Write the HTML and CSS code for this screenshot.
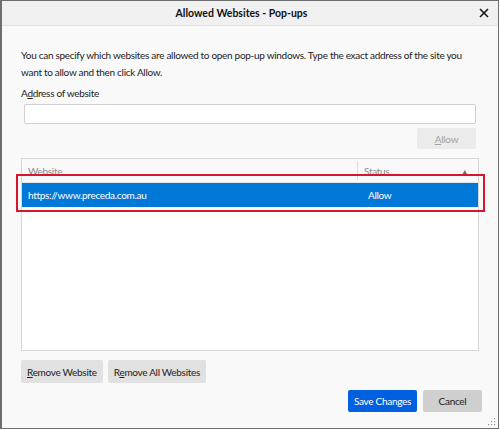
FILE: index.html
```html
<!DOCTYPE html>
<html>
<head>
<meta charset="utf-8">
<link rel="stylesheet" href="styles.css">
</head>
<body>
<div class="window">
  <div class="titlebar">
    <span class="spacer"></span>
    <span class="title">Allowed Websites - Pop-ups</span>
    <span class="close-wrap"><svg class="close" width="10" height="10" viewBox="0 0 10 10"><path d="M1 1 L9 9 M9 1 L1 9" stroke="#1a1a1a" stroke-width="1.6"/></svg></span>
  </div>
  <div class="content">
    <p class="intro">You can specify which websites are allowed to open pop-up windows. Type the exact address of the site you want to allow and then click Allow.</p>
    <label class="label">A<u>d</u>dress of website</label>
    <input class="address" type="text">
    <div class="allow-row"><button class="btn btn-disabled"><u>A</u>llow</button></div>
    <div class="table-wrap">
      <div class="table">
        <div class="thead">
          <div class="th th-site">Website</div>
          <div class="th th-status">Status<span class="sort">&#9650;</span></div>
        </div>
        <div class="row selected">
          <div class="td td-site">https://www.preceda.com.au</div>
          <div class="td td-status">Allow</div>
        </div>
      </div>
      <div class="highlight"></div>
    </div>
    <div class="remove-row">
      <button class="btn btn-grey"><u>R</u>emove Website</button>
      <button class="btn btn-grey">R<u>e</u>move All Websites</button>
    </div>
    <div class="footer">
      <button class="btn btn-primary">Save Changes</button>
      <button class="btn btn-cancel">Cancel</button>
    </div>
  </div>
  <svg class="grip" width="8" height="8" viewBox="0 0 8 8"><g fill="#9a9a9a"><rect x="6" y="0" width="1.2" height="1.2"/><rect x="3" y="3" width="1.2" height="1.2"/><rect x="6" y="3" width="1.2" height="1.2"/><rect x="0" y="6" width="1.2" height="1.2"/><rect x="3" y="6" width="1.2" height="1.2"/><rect x="6" y="6" width="1.2" height="1.2"/></g></svg>
</div>
</body>
</html>
```
FILE: styles.css
```css
html, body {
  margin: 0;
  padding: 0;
  background: #ffffff;
}
body {
  font-family: Lato, "Open Sans", sans-serif;
  font-size: 10px;
  letter-spacing: -0.3px;
  color: #222222;
}
.window {
  position: relative;
  width: 499px;
  height: 429px;
  box-sizing: border-box;
  border: 1px solid #6e6e6e;
  border-left-width: 2px;
  background: #f9f9f9;
  display: flex;
  flex-direction: column;
}
.titlebar {
  height: 24px;
  background: #f0f0f0;
  border-bottom: 1px solid #e2e2e2;
  display: grid;
  grid-template-columns: 1fr auto 1fr;
  align-items: center;
}
.title {
  font-weight: 700;
  font-size: 10.5px;
  letter-spacing: 0;
  margin-right: 17px;
  color: #111;
}
.close-wrap {
  display: flex;
  justify-content: flex-end;
  padding-right: 9px;
}
.content {
  padding: 21px 19px 0 19px;
  display: flex;
  flex-direction: column;
}
.intro {
  margin: 0;
  line-height: 17px;
}
.label {
  margin-top: 4px;
  line-height: 17px;
}
.address {
  margin: 2px 3px 0 3px;
  height: 20px;
  box-sizing: border-box;
  border: 1px solid #d0d0d0;
  border-radius: 2px;
  background: #fff;
}
.allow-row {
  display: flex;
  justify-content: flex-end;
  margin: 4px 3px 0 0;
}
.btn {
  font-family: inherit;
  font-size: 10px;
  letter-spacing: -0.3px;
  white-space: nowrap;
  border: none;
  border-radius: 2px;
  padding: 0 8px;
  height: 22px;
  color: #222222;
}
.btn-disabled {
  width: 59px;
  height: 21px;
  background: #ebebeb;
  color: #a3a3a3;
}
.table-wrap {
  position: relative;
  margin-top: 9px;
}
.table {
  height: 193px;
  box-sizing: border-box;
  border: 1px solid #d6d6d6;
  background: #fff;
}
.thead {
  display: flex;
  height: 23px;
  background: #f9f9f9;
  border-bottom: 1px solid #e6e6e6;
  color: #8c8c8c;
}
.th {
  display: flex;
  align-items: center;
  padding-left: 6px;
}
.th-site {
  flex: 1;
  border-right: 1px solid #dcdcdc;
  margin: 2px 0;
}
.th-status {
  width: 120px;
  box-sizing: border-box;
  justify-content: space-between;
  padding-right: 10px;
}
.sort {
  font-size: 7px;
  color: #6a6a6a;
}
.row {
  display: flex;
  height: 24px;
  align-items: center;
}
.selected {
  background: #0078d7;
  color: #fff;
}
.td-site {
  flex: 1;
  padding-left: 6px;
}
.td-status {
  width: 120px;
  padding-left: 10px;
  box-sizing: border-box;
}
.highlight {
  position: absolute;
  left: -5px;
  right: -6px;
  top: 16px;
  height: 34px;
  border: 2px solid #d4172c;
  pointer-events: none;
}
.remove-row {
  display: flex;
  gap: 5px;
  margin-top: 9px;
}
.btn-grey {
  background: #e1e1e1;
  height: 23px;
  padding: 0 6px;
}
.footer {
  display: flex;
  justify-content: flex-end;
  gap: 6px;
  margin-top: 7px;
  margin-right: -3px;
}
.btn-primary {
  background: #0060df;
  color: #fff;
  width: 69px;
  padding: 0;
}
.btn-cancel {
  background: #cfcfcf;
  width: 59px;
  padding: 0;
}
.grip {
  position: absolute;
  right: 2px;
  bottom: 2px;
}
```
